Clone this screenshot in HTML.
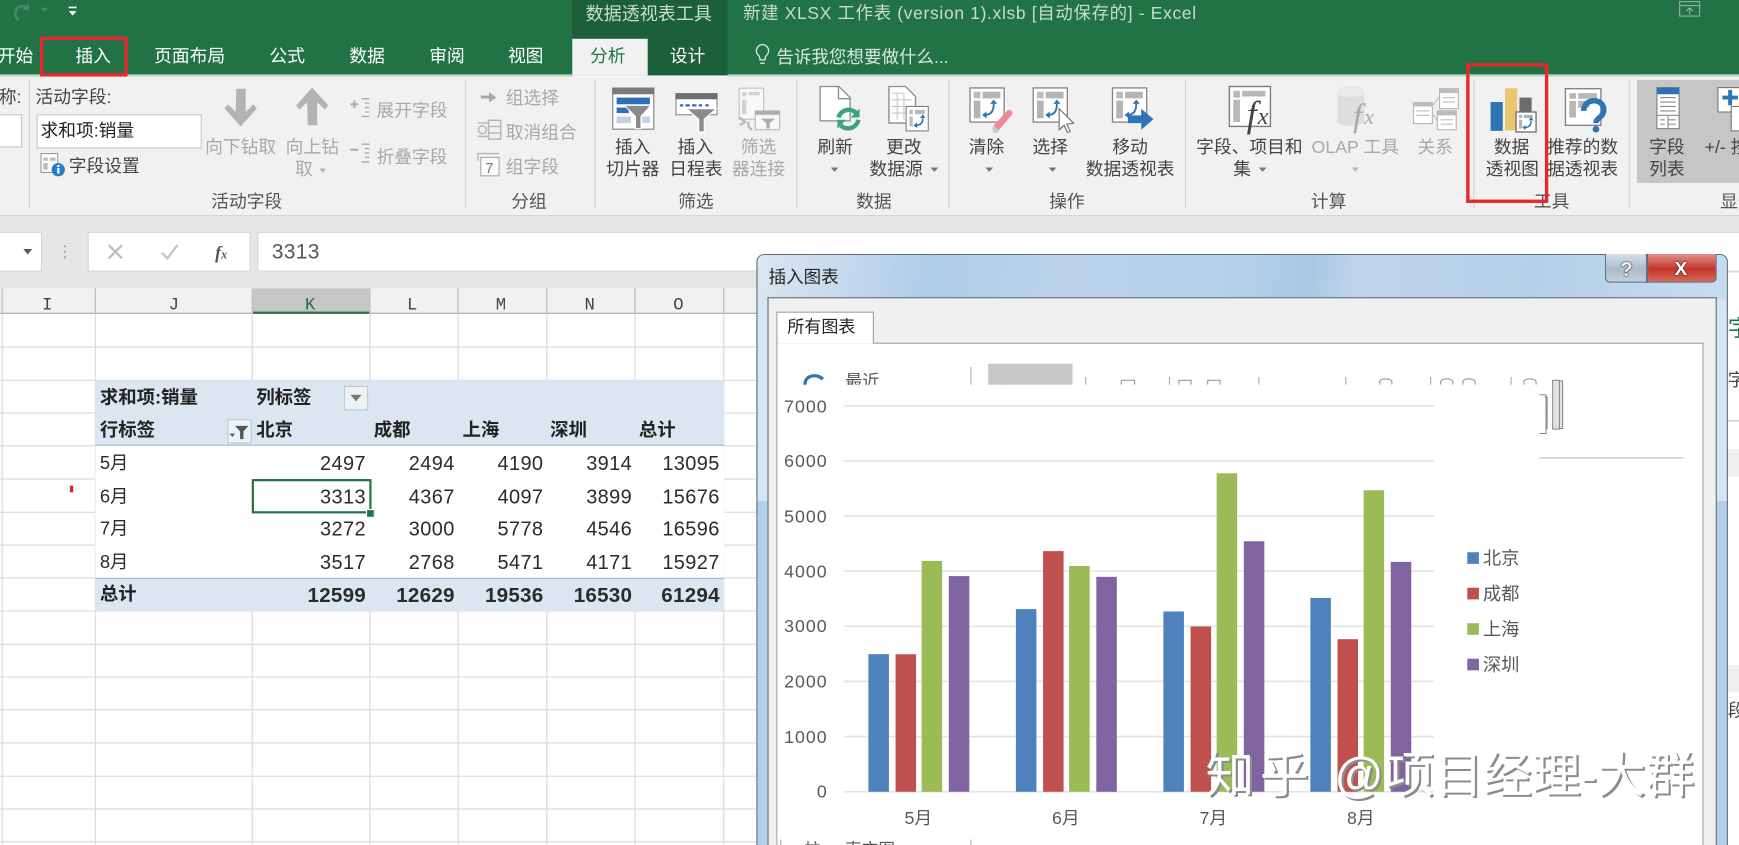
<!DOCTYPE html>
<html lang="zh"><head><meta charset="utf-8"><title>Excel</title>
<style>
html,body{margin:0;padding:0;width:1739px;height:845px;overflow:hidden;background:#fff}
#s{position:absolute;left:0;top:0;width:1568px;height:762px;overflow:hidden;transform:scale(1.10906,1.10892);transform-origin:0 0;filter:blur(.35px);font-family:"Liberation Sans","Noto Sans CJK SC",sans-serif;color:#444}
#s div,#s span{position:absolute}
.t{white-space:nowrap;line-height:1;font-size:16px;margin-top:2px}
.c{transform:translateX(-50%)}
.g{color:#a8a8a8}
.w{color:#fff}
.d{color:#222}
.r{text-align:right;font-size:18px;letter-spacing:.35px;color:#2b2b2b;width:80px;margin-top:.5px}
.b{font-weight:700;font-size:18.6px;letter-spacing:.2px}
.h{font-size:16.6px;font-weight:700;color:#222;margin-top:1px}
.cl{font:15.5px "Liberation Mono",monospace;color:#444;top:265px;margin-top:1px}
.n{font-size:16px;letter-spacing:.9px;color:#595959;margin-top:1.5px}
.m{font-size:16px;color:#595959;margin-top:2.5px}
.l{font-size:16.5px;color:#595959;margin-top:1px}
.wm{font-size:44px;color:#fff;text-shadow:2px 2px 0 #8c8c8c;margin-top:1.5px}
svg{position:absolute;left:0;top:0;overflow:visible}
</style></head><body>
<div id="s">
<!-- title + tab bar -->
<div style="left:0;top:0;width:1568px;height:68px;background:#217346"></div>
<div style="left:516px;top:0;width:140px;height:68px;background:#1c6039"></div>
<div style="left:516px;top:35px;width:68px;height:33px;background:#f1f1f1"></div>
<div style="left:0;top:67px;width:516px;height:2px;background:#b7d3c3"></div>
<div style="left:656px;top:67px;width:912px;height:2px;background:#b7d3c3"></div>
<span class="t" style="left:528px;top:3px;color:#c9dcd0;font-size:16.300px">数据透视表工具</span>
<span class="t" style="left:670px;top:3px;color:#c9dcd0;font-size:15.700px;letter-spacing:.62px">新建 XLSX 工作表 (version 1).xlsb [自动保存的] - Excel</span>
<span class="t w" style="left:-2px;top:42px">开始</span>
<span class="t w c" style="left:84px;top:42px">插入</span>
<span class="t w c" style="left:171px;top:42px">页面布局</span>
<span class="t w c" style="left:259px;top:42px">公式</span>
<span class="t w c" style="left:331px;top:42px">数据</span>
<span class="t w c" style="left:403px;top:42px">审阅</span>
<span class="t w c" style="left:474px;top:42px">视图</span>
<span class="t c" style="left:548px;top:42px;color:#217346">分析</span>
<span class="t w c" style="left:620px;top:42px">设计</span>
<span class="t" style="left:700px;top:43px;color:#dbe8e0;font-size:15.800px">告诉我您想要做什么...</span>

<!-- ribbon -->
<div style="left:0;top:69px;width:1568px;height:125px;background:#f1f1f1"></div>
<div style="left:0;top:194px;width:1568px;height:66px;background:#e6e6e6;border-top:1px solid #d2d2d2;box-sizing:border-box"></div>
<div style="left:1476px;top:72px;width:92px;height:93px;background:#c6c6c6"></div>
<div style="left:0;top:103px;width:20px;height:30px;background:#fff;border:1px solid #c6c6c6;border-left:0;box-sizing:border-box"></div>
<div style="left:32.5px;top:103px;width:149px;height:31px;background:#fff;border:1px solid #c6c6c6;box-sizing:border-box"></div>

<svg width="1568" height="762" viewBox="0 0 1568 762">
<defs>
<symbol id="pv" viewBox="0 0 32 32" overflow="visible">
<rect x=".6" y=".6" width="30.8" height="30.8" fill="#fff" stroke="#858585" stroke-width="1.2"/>
<rect x="4" y="4" width="6" height="6" fill="#bcbcbc"/><rect x="12" y="4" width="16" height="6" fill="#b4b4b4"/><rect x="4" y="12" width="6" height="16" fill="#b4b4b4"/>
<path d="M14 25C20 25 22 21 22 15" fill="none" stroke="#2f75b5" stroke-width="1.7"/>
<path d="M22 11l-3.2 4h6.4zM11.5 25l4 -3.2v6.4z" fill="#2f75b5"/>
</symbol>
</defs>
<!-- separators -->
<g stroke="#d0d0d0" stroke-width="1"><path d="M26.5 72V188M420 72V188M536.5 72V188M718.4 72V188M855.7 72V188M1069 72V188M1329 72V188M1469 72V188"/></g>
<!-- title icons -->
<path d="M14 11a6 6 0 0 1 10-4" fill="none" stroke="#4a8a68" stroke-width="2.2"/><path d="M26 3v6h-6z" fill="#4a8a68"/><path d="M14 11a6 6 0 0 0 3 7" fill="none" stroke="#4a8a68" stroke-width="2.2"/>
<path d="M37 7h6l-3 4z" fill="#4a8a68"/>
<path d="M62 6h7v1.4h-7zM62 10h7l-3.5 4z" fill="#fff"/>
<rect x="1514.5" y="1.5" width="18" height="13" fill="none" stroke="#8fb5a0"/><path d="M1515 5h17M1523.5 13V7M1520.5 10l3-3 3 3" fill="none" stroke="#8fb5a0"/>
<path transform="translate(1,7)" d="M683 43a5.5 5.5 0 1 1 7 0c-1 1-1.200 2-1.200 4h-4.600c0-2-.2-3-1.200-4zM684.500 50h4" fill="none" stroke="#e8f0eb" stroke-width="1.100"/>
<!-- drill arrows -->
<path d="M213 80h8.500v21l7-7 3 4-14.500 16-14.500-16 3-4 7 7z" fill="#b3b3b3"/>
<path d="M277.500 113h8.500v-21l7 7 3-4-14.500-16-14.500 16 3 4 7-7z" fill="#b3b3b3"/>
<g stroke="#a9a9a9" fill="none" stroke-width="1.200"><path d="M316 94h7M319.500 90.500v7" stroke-width="1.800"/><path d="M326 89h7M329 93h4M329 97h4M329 101h4M326 105h7"/>
<path d="M316 135h7" stroke-width="1.800"/><path d="M326 130h7M329 134h4M329 138h4M329 142h4M326 146h7"/></g>
<!-- field settings -->
<rect x="37" y="138.500" width="15" height="17" fill="#fff" stroke="#999"/><path d="M39 142h4v3h-4zM45 142h5v3h-5zM39 147h4v6h-4z" fill="#bbb"/>
<circle cx="52.500" cy="153" r="6" fill="#2b7cd0"/><rect x="51.600" y="151.500" width="2" height="5" fill="#fff"/><rect x="51.600" y="148.800" width="2" height="1.800" fill="#fff"/>
<!-- group icons -->
<path d="M433.500 87.500h9" stroke="#a9a9a9" stroke-width="2.600"/><path d="M441 83l6.500 4.800-6.500 4.800z" fill="#a9a9a9"/>
<g fill="none" stroke="#b5b5b5" stroke-width="1.300"><circle cx="435" cy="117" r="3.500"/><rect x="440.500" y="108.500" width="11" height="17"/><path d="M440.500 114h11M440.500 120h11"/><path d="M431 111h9M431 123h9"/></g>
<path d="M431 145v-6.500h19" fill="none" stroke="#b5b5b5" stroke-width="1.200"/><rect x="433.500" y="142" width="16.500" height="16.500" fill="#fafafa" stroke="#a9a9a9"/><text x="437.500" y="156" font-family="Liberation Sans" font-size="13" fill="#777">7</text>
<!-- slicer -->
<rect x="552.500" y="79.500" width="37" height="37" fill="#fff" stroke="#7f7f7f"/><rect x="552" y="79" width="38" height="6" fill="#7a7a7a"/>
<rect x="556" y="88" width="30" height="6" fill="#2f6fb5"/><rect x="556" y="97" width="11" height="5" fill="#2f6fb5"/><rect x="556" y="105" width="13" height="6" fill="#bfd3e8"/><rect x="579" y="105" width="7" height="6" fill="#bfd3e8"/>
<path d="M563 95h24l-9 10v11h-5v-11z" fill="#8a8a8a" stroke="#fff"/>
<!-- timeline -->
<rect x="609.500" y="84.500" width="37" height="19" fill="#fff" stroke="#8a8a8a"/><rect x="609" y="84" width="38" height="5.500" fill="#6f6f6f"/>
<path d="M613 94h3v2h-3zM618 94h4v2h-4zM624 94h4v2h-4zM630 94h3v2h-3zM636 94h3v2h-3z" fill="#2f6fb5"/>
<path d="M619 98h27l-11 9.500v11.500h-5v-11.500z" fill="#8a8a8a" stroke="#fff"/>
<!-- filter connections -->
<g opacity=".55"><rect x="666.500" y="79.500" width="22" height="28" fill="#fff" stroke="#999"/><path d="M669 83h4v4h-4zM675 83h10v3h-10zM669 90h4v13h-4z" fill="#bbb"/>
<rect x="681" y="100" width="22" height="17" fill="#fff" stroke="#888"/><rect x="681" y="100" width="22" height="3.500" fill="#777"/><path d="M686 107h13l-5 4v5h-3v-5z" fill="#777"/>
<path d="M675 110c-1 3 0 5 3 7M667 106l5 4-5 3" fill="none" stroke="#888" stroke-width="2"/></g>
<!-- refresh -->
<path d="M739.500 78h17l10 10v21h-27z" fill="#fff" stroke="#8c8c8c" stroke-width="1.200"/><path d="M756 78v11h11" fill="none" stroke="#8c8c8c" stroke-width="1.200"/>
<path d="M756 106a9.500 9.500 0 0 1 16-4M774 108a9.500 9.500 0 0 1-16 5" fill="none" stroke="#3ea37a" stroke-width="4"/><path d="M775 98v8h-8zM755 116v-8h8z" fill="#3ea37a"/>
<!-- change source -->
<path d="M801.500 78h15l9 9v24h-24z" fill="#fff" stroke="#8c8c8c" stroke-width="1.200"/><path d="M804 84h10M804 90h18M804 96h18M804 102h18M809 84v24M815 84v24" stroke="#c8c8c8"/>
<rect x="817" y="96" width="20" height="22" fill="#fff" stroke="#808080"/><rect x="820" y="99" width="3" height="4" fill="#bbb"/><rect x="825" y="99" width="9" height="4" fill="#bbb"/><rect x="820" y="105" width="3" height="9" fill="#bbb"/>
<path d="M826 113c4 0 6-2 6-6" fill="none" stroke="#2f75b5" stroke-width="1.500"/><path d="M832 103l-2.500 3.500h5zM823.500 113l3.500-2.500v5z" fill="#2f75b5"/>
<!-- pv actions -->
<use href="#pv" x="874" y="78.700" width="32" height="32"/>
<path d="M896 113l12-13c1-1 3-1 4 0l0 0c1 2 1 3 0 4l-12 14c-1 1-3 1-4 0z" fill="#ee8a9a"/><path d="M896 113l5 5-1.500 1c-1 1-3 1-4 0l-1-3z" fill="#cbcbcb"/>
<use href="#pv" x="931" y="78.700" width="32" height="32"/>
<path d="M955 98v19l4.500-4 3 6.500 2.500-1-3-6.500 6-1z" fill="#fff" stroke="#777" stroke-width="1.100"/>
<use href="#pv" x="1002.500" y="78.700" width="32" height="32"/>
<path d="M1017 104h12v-6l11 9.500-11 9.500v-6h-12z" fill="#2f75b5"/>
<!-- fx -->
<rect x="1108.500" y="78" width="37" height="36" fill="#fff" stroke="#7f7f7f" stroke-width="1.300"/><path d="M1112 82h6v6h-6zM1120 82h21v5h-21zM1112 90h6v20h-6z" fill="#b8b8b8"/>
<text x="1124" y="114" font-family="Liberation Serif" font-style="italic" font-size="33" fill="#444">f</text><text x="1134" y="112" font-family="Liberation Serif" font-style="italic" font-size="22" fill="#444">x</text>
<!-- olap -->
<path d="M1206 83c0-7 24-7 24 0v26c0 6-24 6-24 0z" fill="#dedede"/><ellipse cx="1218" cy="83" rx="12" ry="4.500" fill="#eaeaea"/>
<text x="1220" y="114" font-family="Liberation Serif" font-style="italic" font-size="30" fill="#a9a9a9">f</text><text x="1230" y="112" font-family="Liberation Serif" font-style="italic" font-size="20" fill="#a9a9a9">x</text>
<!-- relations -->
<g fill="#fff" stroke="#b5b5b5"><rect x="1274.500" y="92.500" width="17" height="19"/><rect x="1298" y="80" width="17" height="18"/><rect x="1296" y="100" width="17" height="17"/></g>
<path d="M1274 92h18v4h-18zM1298 80h17v4h-17zM1296 100h17v4h-17z" fill="#bcbcbc"/><path d="M1277 100h12M1277 104h12M1301 88h11M1301 92h11M1299 108h11M1299 112h11M1292 95l6-8M1292 103l4 6" stroke="#bcbcbc" fill="none"/>
<!-- pivot chart -->
<rect x="1344" y="92" width="11" height="26" fill="#2f75b5"/><rect x="1357" y="79.700" width="11" height="38" fill="#eac56f"/><rect x="1370" y="88" width="11" height="16" fill="#6d6d6d"/>
<rect x="1367" y="101" width="18" height="18" fill="#fff" stroke="#707070" stroke-width="1.200"/><path d="M1369.500 103.500h3v3h-3zM1374 103.500h8v3h-8zM1369.500 108h3v8h-3z" fill="#b5b5b5"/>
<path d="M1374.500 115c4 0 6-2 6-6" fill="none" stroke="#2f75b5" stroke-width="1.300"/><path d="M1380.500 105.500l-2.200 3h4.400zM1372.500 115l3-2.200v4.400z" fill="#2f75b5"/>
<!-- recommended -->
<rect x="1411.500" y="80" width="32" height="33" fill="#fff" stroke="#808080" stroke-width="1.200"/><path d="M1415 84h6v5h-6zM1423 84h17v5h-17zM1415 91h6v15h-6zM1423 91h10v6h-10z" fill="#b8b8b8"/>
<path d="M1428 100c0-12 18-12 18-1 0 7-7 7-7 12" fill="none" stroke="#2f75b5" stroke-width="5"/><circle cx="1439" cy="116.500" r="3" fill="#2f75b5"/>
<!-- field list -->
<rect x="1494" y="79" width="20" height="37" fill="#fff" stroke="#808080"/><rect x="1494" y="79" width="20" height="6" fill="#2f6fb5"/>
<path d="M1497 88h14M1497 92h14M1497 96h14M1497 100h14M1494 104h20M1497 108h4M1504 108h7M1497 112h4M1504 112h7M1504 104v12" stroke="#8a8a8a" fill="none"/>
<rect x="1549" y="79" width="24" height="22" fill="#fff" stroke="#777"/><path d="M1553 88h14M1560 81v14" stroke="#2f75b5" stroke-width="3.500"/>
<rect x="1561" y="96" width="12" height="22" fill="#fff" stroke="#777"/>
<!-- small dropdown carets -->
<g fill="#777"><path d="M749 151h7l-3.500 4z"/><path d="M839 151h7l-3.500 4z"/><path d="M888.500 151h7l-3.500 4z"/><path d="M945.500 151h7l-3.500 4z"/><path d="M1135 151h7l-3.500 4z"/></g>
<g fill="#b5b5b5"><path d="M288 152h6l-3 4z"/><path d="M1219 151h6l-3 4z"/></g>
</svg>

<!-- ribbon text -->
<span class="t" style="left:-1px;top:79px">称:</span>
<span class="t" style="left:32px;top:79px">活动字段:</span>
<span class="t d" style="left:36.500px;top:109px">求和项:销量</span>
<span class="t" style="left:62px;top:141px">字段设置</span>
<span class="t g c" style="left:217px;top:124px">向下钻取</span>
<span class="t g c" style="left:281.500px;top:124px">向上钻</span>
<span class="t g c" style="left:274px;top:144px">取</span>
<span class="t g" style="left:339.500px;top:91px">展开字段</span>
<span class="t g" style="left:339.500px;top:133px">折叠字段</span>
<span class="t c" style="left:222.500px;top:173px;color:#555">活动字段</span>
<span class="t g" style="left:456px;top:80px">组选择</span>
<span class="t g" style="left:456px;top:111px">取消组合</span>
<span class="t g" style="left:456px;top:142px">组字段</span>
<span class="t c" style="left:477px;top:173px;color:#555">分组</span>
<span class="t c" style="left:570.500px;top:124px">插入</span><span class="t c" style="left:570.500px;top:144px">切片器</span>
<span class="t c" style="left:627px;top:124px">插入</span><span class="t c" style="left:627.500px;top:144px">日程表</span>
<span class="t g c" style="left:684px;top:124px">筛选</span><span class="t g c" style="left:684px;top:144px">器连接</span>
<span class="t c" style="left:627.500px;top:173px;color:#555">筛选</span>
<span class="t c" style="left:753px;top:124px">刷新</span>
<span class="t c" style="left:815px;top:124px">更改</span><span class="t" style="left:784px;top:144px">数据源</span>
<span class="t c" style="left:788px;top:173px;color:#555">数据</span>
<span class="t c" style="left:889.500px;top:124px">清除</span>
<span class="t c" style="left:947px;top:124px">选择</span>
<span class="t c" style="left:1019px;top:124px">移动</span><span class="t c" style="left:1019px;top:144px">数据透视表</span>
<span class="t c" style="left:962px;top:173px;color:#555">操作</span>
<span class="t c" style="left:1126.500px;top:124px">字段、项目和</span><span class="t c" style="left:1120px;top:144px">集</span>
<span class="t g c" style="left:1222px;top:124px">OLAP 工具</span>
<span class="t g c" style="left:1294px;top:124px">关系</span>
<span class="t c" style="left:1198px;top:173px;color:#555">计算</span>
<span class="t c" style="left:1363px;top:124px">数据</span><span class="t c" style="left:1363.500px;top:144px">透视图</span>
<span class="t c" style="left:1427px;top:124px">推荐的数</span><span class="t c" style="left:1427px;top:144px">据透视表</span>
<span class="t c" style="left:1399px;top:173px;color:#555">工具</span>
<span class="t c" style="left:1503px;top:124px">字段</span><span class="t c" style="left:1503px;top:144px">列表</span>
<span class="t" style="left:1537px;top:124px">+/- 按钮</span>
<span class="t" style="left:1551px;top:173px;color:#555">显示</span>

<!-- formula bar -->
<div style="left:0;top:209px;width:38px;height:36px;background:#fff;border:1px solid #d4d4d4;border-left:0;box-sizing:border-box"></div>
<div style="left:79px;top:209px;width:147px;height:36px;background:#fff;border:1px solid #d4d4d4;box-sizing:border-box"></div>
<div style="left:232px;top:209px;width:1340px;height:36px;background:#fff;border:1px solid #d4d4d4;box-sizing:border-box"></div>
<svg width="1568" height="762"><path d="M21 224.500h8l-4 5z" fill="#555"/><path d="M58.500 221v2M58.500 226v2M58.500 231v2" stroke="#aaa" stroke-width="2"/><path d="M98 221l12 12M110 221l-12 12" stroke="#bdbdbd" stroke-width="2"/><path d="M146 228l5 5 9-12" fill="none" stroke="#c2c2c2" stroke-width="2"/></svg>
<span class="t" style="left:194px;top:218px;font:italic 700 16px 'Liberation Serif',serif;color:#555">f<small style="font-size:11px">x</small></span>
<span class="t" style="left:245px;top:217px;font-size:19px;letter-spacing:.25px;color:#555;margin-top:1px">3313</span>

<!-- column header -->
<div style="left:0;top:260px;width:1568px;height:23px;background:#f1f1f1;border-bottom:1.500px solid #a6a6a6;box-sizing:border-box"></div>
<div style="left:227.500px;top:260px;width:106px;height:23px;background:#c6c6c6;border-bottom:2px solid #217346;box-sizing:border-box"></div>
<span class="t cl" style="left:38px">I</span><span class="t cl" style="left:152px">J</span><span class="t cl" style="left:275px;color:#217346">K</span><span class="t cl" style="left:367px">L</span><span class="t cl" style="left:447px">M</span><span class="t cl" style="left:527px">N</span><span class="t cl" style="left:607px">O</span>

<!-- grid -->
<svg width="1568" height="762"><g stroke="#dfdfdf" stroke-width="1.200">
<path d="M2 283V762M86 283V762M227.500 283V762M333.500 283V762M413 283V762M493 283V762M572.500 283V762M652.500 283V762"/>
<path d="M0 313H690M0 343H690M0 372.500H690M0 402H690M0 432H690M0 462H690M0 491.500H690M0 521H690M0 551H690M0 581H690M0 610.500H690M0 640H690M0 670H690M0 700H690M0 729.500H690M0 759H690"/>
<path stroke="#c0c0c0" d="M2 260V283M86 260V283M227.500 260V283M333.500 260V283M413 260V283M493 260V283M572.500 260V283M652.500 260V283"/>
</g></svg>

<!-- pivot -->
<div style="left:86px;top:343px;width:567px;height:59px;background:#dce6f1;border-bottom:1px solid #95b3d7;box-sizing:border-box"></div>
<div style="left:86px;top:521px;width:567px;height:30px;background:#dce6f1;border-top:1px solid #95b3d7;box-sizing:border-box"></div>
<div style="left:86px;top:402px;width:567px;height:119px;background:#fff"></div>

<span class="t h" style="left:90px;top:350px">求和项:销量</span><span class="t h" style="left:231px;top:350px">列标签</span>
<span class="t h" style="left:90px;top:379px">行标签</span><span class="t h" style="left:231px;top:379px">北京</span><span class="t h" style="left:337px;top:379px">成都</span><span class="t h" style="left:417px;top:379px">上海</span><span class="t h" style="left:496px;top:379px">深圳</span><span class="t h" style="left:576px;top:379px">总计</span>
<div style="left:310px;top:348px;width:22px;height:22px;background:#eef2f7;border:1px solid #bcc6d2;box-sizing:border-box"></div>
<svg width="1568" height="762"><path d="M316 356h10l-5 6z" fill="#777"/></svg>
<div style="left:204.500px;top:378px;width:22.500px;height:22px;background:#eef2f7;border:1px solid #bcc6d2;box-sizing:border-box"></div>
<svg width="1568" height="762"><path d="M212 384h12l-4.500 5v7h-3v-7z" fill="#555"/><path d="M207 391h5l-2.500 3z" fill="#555"/></svg>

<span class="t" style="left:90px;top:408px;font-size:16.600px;color:#2b2b2b">5月</span>
<span class="t" style="left:90px;top:438px;font-size:16.600px;color:#2b2b2b">6月</span>
<span class="t" style="left:90px;top:467px;font-size:16.600px;color:#2b2b2b">7月</span>
<span class="t" style="left:90px;top:497px;font-size:16.600px;color:#2b2b2b">8月</span>
<span class="t h" style="left:90px;top:527px">总计</span>

<span class="t r" style="left:250px;top:408px">2497</span><span class="t r" style="left:330px;top:408px">2494</span><span class="t r" style="left:410px;top:408px">4190</span><span class="t r" style="left:490px;top:408px">3914</span><span class="t r" style="left:569px;top:408px">13095</span>
<span class="t r" style="left:250px;top:438px">3313</span><span class="t r" style="left:330px;top:438px">4367</span><span class="t r" style="left:410px;top:438px">4097</span><span class="t r" style="left:490px;top:438px">3899</span><span class="t r" style="left:569px;top:438px">15676</span>
<span class="t r" style="left:250px;top:467px">3272</span><span class="t r" style="left:330px;top:467px">3000</span><span class="t r" style="left:410px;top:467px">5778</span><span class="t r" style="left:490px;top:467px">4546</span><span class="t r" style="left:569px;top:467px">16596</span>
<span class="t r" style="left:250px;top:497px">3517</span><span class="t r" style="left:330px;top:497px">2768</span><span class="t r" style="left:410px;top:497px">5471</span><span class="t r" style="left:490px;top:497px">4171</span><span class="t r" style="left:569px;top:497px">15927</span>
<span class="t r b" style="left:250px;top:527px">12599</span><span class="t r b" style="left:330px;top:527px">12629</span><span class="t r b" style="left:410px;top:527px">19536</span><span class="t r b" style="left:490px;top:527px">16530</span><span class="t r b" style="left:569px;top:527px">61294</span>

<div style="left:226.500px;top:431.500px;width:108px;height:31px;border:2px solid #217346;box-sizing:border-box"></div>
<div style="left:330px;top:459px;width:6px;height:6px;background:#217346;border:1px solid #fff;box-sizing:content-box"></div>
<div style="left:62.500px;top:438px;width:3.500px;height:5.500px;background:#e5202a"></div>

<!-- right of dialog -->
<div style="left:1557px;top:246px;width:11px;height:516px;background:#fff"></div>
<div style="left:1557px;top:379px;width:11px;height:1px;background:#bbb"></div>
<div style="left:1557px;top:405px;width:11px;height:25px;background:#efefef"></div>
<div style="left:1557px;top:600px;width:11px;height:24px;background:#efefef"></div>
<span class="t" style="left:1558px;top:285px;font-size:20px;color:#217346">字</span>
<span class="t" style="left:1558px;top:334px">字</span>
<span class="t" style="left:1558px;top:632px">段</span>

<!-- dialog -->
<div style="left:682px;top:229px;width:876px;height:540px;border:1px solid #5f6b78;border-radius:7px 7px 0 0;box-sizing:border-box;background:linear-gradient(180deg,#d6e5f3 0,#d6e5f3 222px,#b4cfe8 222px,#b4cfe8 100%);overflow:hidden">
<div style="left:0;top:0;width:100%;height:40px;background:linear-gradient(97deg,#dbe6f0 0%,#c9dbee 8%,#aecbe8 18%,#bcd3eb 32%,#b4cfea 50%,#a9c7e4 57%,#bfd5ec 62%,#b5cfe8 80%,#c8dcf0 100%)"></div>
</div>
<div style="left:692px;top:268px;width:856px;height:500px;background:#f0f0f0;border:1px solid #5f6b78;border-bottom:0;box-sizing:border-box"></div>
<span class="t d" style="left:693px;top:241px;font-size:15.800px">插入图表</span>
<!-- caption buttons -->
<div style="left:1447px;top:229px;width:38px;height:26px;background:linear-gradient(180deg,#d6dfe9,#a9bccd 55%,#c2d0dd);border:1px solid #5f6b78;border-top:0;border-radius:0 0 0 5px;box-sizing:border-box"></div>
<div style="left:1485px;top:229px;width:63px;height:26px;background:linear-gradient(180deg,#dd9388,#c5352a 55%,#d46a5c);border:1px solid #5f6b78;border-top:0;border-radius:0 0 5px 0;box-sizing:border-box"></div>
<span class="t" style="left:1461px;top:233px;margin:0;font:700 18px 'Liberation Sans',sans-serif;color:#eef2f6;text-shadow:0 0 1.500px #222,0 0 1px #222">?</span>
<span class="t" style="left:1510px;top:233px;margin:0;font:700 17px 'Liberation Sans',sans-serif;color:#fff;text-shadow:0 0 1.500px #222,0 0 1px #222">X</span>

<!-- tab -->
<div style="left:700px;top:309px;width:836px;height:460px;background:#fff;border:1px solid #a0a0a0;box-sizing:border-box"></div>
<div style="left:700px;top:280.500px;width:88px;height:29.500px;background:#fff;border:1px solid #a0a0a0;border-bottom:0;box-sizing:border-box"></div>
<span class="t d" style="left:710px;top:286px;font-size:15.300px">所有图表</span>

<!-- visible bits above pasted chart -->
<span class="t" style="left:762px;top:335px;font-size:15.500px;color:#555">最近</span>
<svg width="1568" height="762"><path d="M726 347c-1-8 10-11 16-5" fill="none" stroke="#2f75b5" stroke-width="3"/>
<path d="M875.500 331v16M902.500 340v7M979 340v7M1054.500 340v7M1135 340v7M1213.500 340v7M1290 340v7M1362.500 340v7" stroke="#aaa"/>
<path d="M1011 347v-4h12v4M1063 347v-4h11v4M1089 347v-4h11v4M1244 347v-3c1-3 10-3 11 0v3M1299 347v-3c1-3 10-3 11 0v3M1319 347v-3c1-3 10-3 11 0v3M1374 347v-3c1-3 10-3 11 0v3" fill="none" stroke="#999"/></svg>
<div style="left:891px;top:328px;width:76px;height:19px;background:#c6c6c6"></div>

<!-- pasted chart -->
<div style="left:701px;top:347px;width:687px;height:415px;background:#fff"></div>
<svg width="1568" height="762">
<path d="M1406 343.500h3v43h-3zM1393 358h2v29M1400 343h6v44h-6z" fill="#e2e2e2" stroke="#777" stroke-width=".8"/>
<path d="M1388 391h6v-3M1388 356h6v35" fill="none" stroke="#777" stroke-width=".8"/>
<path d="M1388 413H1518" stroke="#bdbdbd"/>
<g stroke="#e4e4e4" stroke-width="1.500"><path d="M761 366H1293M761 415.700H1293M761 465.400H1293M761 515.100H1293M761 564.800H1293M761 614.500H1293M761 664.200H1293M761 714H1293"/></g>
<g fill="#4f81bd"><rect x="783" y="589.900" width="18.500" height="124.100"/><rect x="916" y="549.300" width="18.500" height="164.700"/><rect x="1049" y="551.400" width="18.500" height="162.600"/><rect x="1181.500" y="539.200" width="18.500" height="174.800"/><rect x="1323" y="498" width="10.500" height="10.500"/></g>
<g fill="#c0504d"><rect x="807.500" y="590" width="18.500" height="124"/><rect x="940.500" y="497" width="18.500" height="217"/><rect x="1073.500" y="564.900" width="18.500" height="149.100"/><rect x="1206" y="576.400" width="18.500" height="137.600"/><rect x="1323" y="530" width="10.500" height="10.500"/></g>
<g fill="#9bbb59"><rect x="831" y="505.800" width="18.500" height="208.200"/><rect x="964" y="510.400" width="18.500" height="203.600"/><rect x="1097" y="426.800" width="18.500" height="287.200"/><rect x="1229.500" y="442.100" width="18.500" height="271.900"/><rect x="1323" y="562" width="10.500" height="10.500"/></g>
<g fill="#8064a2"><rect x="855.500" y="519.500" width="18.500" height="194.500"/><rect x="988.500" y="520.200" width="18.500" height="193.800"/><rect x="1121.500" y="488.100" width="18.500" height="225.900"/><rect x="1254" y="506.700" width="18.500" height="207.300"/><rect x="1323" y="594" width="10.500" height="10.500"/></g>
</svg>
<span class="t n" style="left:707px;top:358px">7000</span>
<span class="t n" style="left:707px;top:407px">6000</span>
<span class="t n" style="left:707px;top:457px">5000</span>
<span class="t n" style="left:707px;top:507px">4000</span>
<span class="t n" style="left:707px;top:556px">3000</span>
<span class="t n" style="left:707px;top:606px">2000</span>
<span class="t n" style="left:707px;top:656px">1000</span>
<span class="t n" style="left:736.500px;top:705px">0</span>
<span class="t c m" style="left:828px;top:728px">5月</span>
<span class="t c m" style="left:961px;top:728px">6月</span>
<span class="t c m" style="left:1094px;top:728px">7月</span>
<span class="t c m" style="left:1227px;top:728px">8月</span>
<span class="t l" style="left:1337px;top:495px">北京</span>
<span class="t l" style="left:1337px;top:527px">成都</span>
<span class="t l" style="left:1337px;top:559px">上海</span>
<span class="t l" style="left:1337px;top:591px">深圳</span>
<span class="t" style="left:725px;top:757px;font-size:15px;color:#555">柱</span>
<span class="t" style="left:762px;top:757px;font-size:15px;color:#555">直方图</span>
<svg width="1568" height="762"><path d="M875.500 757v5M704 757v5" stroke="#aaa"/></svg>

<!-- watermark -->
<span class="t wm" style="left:1087px;top:676px;letter-spacing:5px">知乎</span>
<span class="t wm" style="left:1203px;top:676px">@</span>
<span class="t wm" style="left:1249px;top:676px">项目经理-大群</span>

<!-- red annotation boxes -->
<div style="left:35.500px;top:33px;width:79px;height:35.500px;border:3px solid #e8262c;box-sizing:border-box"></div>
<div style="left:1322px;top:57px;width:74px;height:126px;border:3px solid #e8262c;box-sizing:border-box"></div>
</div>
</body></html>
